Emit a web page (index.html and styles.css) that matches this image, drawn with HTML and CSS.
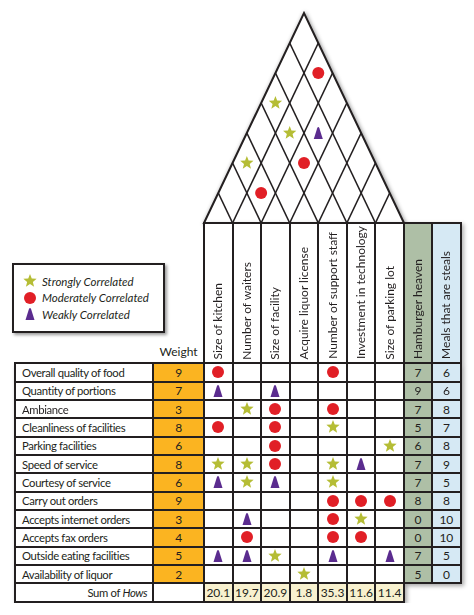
FILE: index.html
```html
<!DOCTYPE html>
<html lang="en">
<head>
  <meta charset="UTF-8">
  <title>House of Quality</title>
  <link rel="stylesheet" href="styles.css">
</head>
<body>
  <svg class="defs" width="0" height="0">
    <symbol id="s" viewBox="-7 -7 14 14"><path fill="#b5bd35" d="M0,-7 L1.76,-2.43 L6.66,-2.16 L2.85,0.93 L4.11,5.66 L0,3 L-4.11,5.66 L-2.85,0.93 L-6.66,-2.16 L-1.76,-2.43 Z"/></symbol>
    <symbol id="m" viewBox="-7 -7 14 14"><circle r="6" fill="#e11f26"/></symbol>
    <symbol id="w" viewBox="-7 -7 14 14"><path fill="#5b2c8f" d="M-4.5,6 L-1.2,-4.6 Q0,-7.2 1.2,-4.6 L4.5,6 Z"/></symbol>
  </svg>

  <div class="page">
    <!-- roof: correlations between the hows -->
    <svg class="roof" width="200" height="209" viewBox="0 0 200 209">
      <path class="edge" d="M0,210 L100,0 L200,210 Z"/>
      <line x1="28.57" y1="210" x2="114.29" y2="30"/>
      <line x1="57.14" y1="210" x2="128.57" y2="60"/>
      <line x1="85.71" y1="210" x2="142.86" y2="90"/>
      <line x1="114.29" y1="210" x2="157.14" y2="120"/>
      <line x1="142.86" y1="210" x2="171.43" y2="150"/>
      <line x1="171.43" y1="210" x2="185.71" y2="180"/>
      <line x1="28.57" y1="210" x2="14.29" y2="180"/>
      <line x1="57.14" y1="210" x2="28.57" y2="150"/>
      <line x1="85.71" y1="210" x2="42.86" y2="120"/>
      <line x1="114.29" y1="210" x2="57.14" y2="90"/>
      <line x1="142.86" y1="210" x2="71.43" y2="60"/>
      <line x1="171.43" y1="210" x2="85.71" y2="30"/>
      <use href="#m" x="107.29" y="53" width="14" height="14"/>
      <use href="#s" x="64.43" y="83" width="14" height="14"/>
      <use href="#s" x="78.71" y="113" width="14" height="14"/>
      <use href="#w" x="107.29" y="113" width="14" height="14"/>
      <use href="#s" x="35.86" y="143" width="14" height="14"/>
      <use href="#m" x="93" y="143" width="14" height="14"/>
      <use href="#m" x="50.14" y="173" width="14" height="14"/>
    </svg>

    <div class="top">
      <div class="corner">
        <div class="legend">
          <div class="key"><svg class="sym"><use href="#s"/></svg><span>Strongly Correlated</span></div>
          <div class="key"><svg class="sym"><use href="#m"/></svg><span>Moderately Correlated</span></div>
          <div class="key"><svg class="sym"><use href="#w"/></svg><span>Weakly Correlated</span></div>
        </div>
        <div class="weight-label">Weight</div>
      </div>
      <div class="heads">
        <div class="head"><span>Size of kitchen</span></div>
        <div class="head"><span>Number of waiters</span></div>
        <div class="head"><span>Size of facility</span></div>
        <div class="head"><span>Acquire liquor license</span></div>
        <div class="head"><span>Number of support staff</span></div>
        <div class="head"><span>Investment in technology</span></div>
        <div class="head"><span>Size of parking lot</span></div>
        <div class="head heaven"><span>Hamburger heaven</span></div>
        <div class="head steals"><span>Meals that are steals</span></div>
      </div>
    </div>

    <div class="matrix">
      <div class="c name">Overall quality of food</div><div class="c wt">9</div>
      <div class="c"><svg class="sym"><use href="#m"/></svg></div><div class="c"></div><div class="c"></div><div class="c"></div>
      <div class="c"><svg class="sym"><use href="#m"/></svg></div><div class="c"></div><div class="c"></div>
      <div class="c hh">7</div><div class="c ms">6</div>

      <div class="c name">Quantity of portions</div><div class="c wt">7</div>
      <div class="c"><svg class="sym"><use href="#w"/></svg></div><div class="c"></div><div class="c"><svg class="sym"><use href="#w"/></svg></div><div class="c"></div>
      <div class="c"></div><div class="c"></div><div class="c"></div>
      <div class="c hh">9</div><div class="c ms">6</div>

      <div class="c name">Ambiance</div><div class="c wt">3</div>
      <div class="c"></div><div class="c"><svg class="sym"><use href="#s"/></svg></div><div class="c"><svg class="sym"><use href="#m"/></svg></div><div class="c"></div>
      <div class="c"><svg class="sym"><use href="#m"/></svg></div><div class="c"></div><div class="c"></div>
      <div class="c hh">7</div><div class="c ms">8</div>

      <div class="c name">Cleanliness of facilities</div><div class="c wt">8</div>
      <div class="c"><svg class="sym"><use href="#m"/></svg></div><div class="c"></div><div class="c"><svg class="sym"><use href="#m"/></svg></div><div class="c"></div>
      <div class="c"><svg class="sym"><use href="#s"/></svg></div><div class="c"></div><div class="c"></div>
      <div class="c hh">5</div><div class="c ms">7</div>

      <div class="c name">Parking facilities</div><div class="c wt">6</div>
      <div class="c"></div><div class="c"></div><div class="c"><svg class="sym"><use href="#m"/></svg></div><div class="c"></div>
      <div class="c"></div><div class="c"></div><div class="c"><svg class="sym"><use href="#s"/></svg></div>
      <div class="c hh">6</div><div class="c ms">8</div>

      <div class="c name">Speed of service</div><div class="c wt">8</div>
      <div class="c"><svg class="sym"><use href="#s"/></svg></div><div class="c"><svg class="sym"><use href="#s"/></svg></div><div class="c"><svg class="sym"><use href="#m"/></svg></div><div class="c"></div>
      <div class="c"><svg class="sym"><use href="#s"/></svg></div><div class="c"><svg class="sym"><use href="#w"/></svg></div><div class="c"></div>
      <div class="c hh">7</div><div class="c ms">9</div>

      <div class="c name">Courtesy of service</div><div class="c wt">6</div>
      <div class="c"><svg class="sym"><use href="#w"/></svg></div><div class="c"><svg class="sym"><use href="#s"/></svg></div><div class="c"><svg class="sym"><use href="#w"/></svg></div><div class="c"></div>
      <div class="c"><svg class="sym"><use href="#s"/></svg></div><div class="c"></div><div class="c"></div>
      <div class="c hh">7</div><div class="c ms">5</div>

      <div class="c name">Carry out orders</div><div class="c wt">9</div>
      <div class="c"></div><div class="c"></div><div class="c"></div><div class="c"></div>
      <div class="c"><svg class="sym"><use href="#m"/></svg></div><div class="c"><svg class="sym"><use href="#m"/></svg></div><div class="c"><svg class="sym"><use href="#m"/></svg></div>
      <div class="c hh">8</div><div class="c ms">8</div>

      <div class="c name">Accepts internet orders</div><div class="c wt">3</div>
      <div class="c"></div><div class="c"><svg class="sym"><use href="#w"/></svg></div><div class="c"></div><div class="c"></div>
      <div class="c"><svg class="sym"><use href="#m"/></svg></div><div class="c"><svg class="sym"><use href="#s"/></svg></div><div class="c"></div>
      <div class="c hh">0</div><div class="c ms">10</div>

      <div class="c name">Accepts fax orders</div><div class="c wt">4</div>
      <div class="c"></div><div class="c"><svg class="sym"><use href="#m"/></svg></div><div class="c"></div><div class="c"></div>
      <div class="c"><svg class="sym"><use href="#m"/></svg></div><div class="c"><svg class="sym"><use href="#m"/></svg></div><div class="c"></div>
      <div class="c hh">0</div><div class="c ms">10</div>

      <div class="c name">Outside eating facilities</div><div class="c wt">5</div>
      <div class="c"><svg class="sym"><use href="#w"/></svg></div><div class="c"><svg class="sym"><use href="#w"/></svg></div><div class="c"><svg class="sym"><use href="#s"/></svg></div><div class="c"></div>
      <div class="c"><svg class="sym"><use href="#w"/></svg></div><div class="c"></div><div class="c"><svg class="sym"><use href="#w"/></svg></div>
      <div class="c hh">7</div><div class="c ms">5</div>

      <div class="c name">Availability of liquor</div><div class="c wt">2</div>
      <div class="c"></div><div class="c"></div><div class="c"></div><div class="c"><svg class="sym"><use href="#s"/></svg></div>
      <div class="c"></div><div class="c"></div><div class="c"></div>
      <div class="c hh">5</div><div class="c ms">0</div>

      <div class="c name sum-label">Sum of&nbsp;<em>Hows</em></div><div class="c"></div>
      <div class="c total">20.1</div><div class="c total">19.7</div><div class="c total">20.9</div><div class="c total">1.8</div>
      <div class="c total">35.3</div><div class="c total">11.6</div><div class="c total">11.4</div>
    </div>
  </div>
</body>
</html>
```

FILE: styles.css
```css
body {
  margin: 0;
  background: #fff;
  font-family: Lato, "Liberation Sans", sans-serif;
  font-size: 12px;
  color: #231f20;
}
.defs {
  display: block;
}
.page {
  padding: 13px 0 0 14px;
}
.roof {
  display: block;
  margin-left: 190px;
  overflow: visible;
  filter: drop-shadow(1px 1px 2px rgba(0,0,0,0.45));
}
.roof .edge {
  fill: #fff;
  stroke: #231f20;
  stroke-width: 2;
}
.roof line {
  stroke: #231f20;
  stroke-width: 1.6;
}
.sym {
  width: 14px;
  height: 14px;
  flex: none;
}

/* header band */
.top {
  display: flex;
}
.corner {
  width: 191px;
  height: 142.3px;
  box-sizing: border-box;
  border-right: 2px solid #231f20;
  border-bottom: 2px solid #231f20;
  display: flex;
  flex-direction: column;
}
.legend {
  margin: 41px 0 0 -2px;
  width: 153px;
  height: 70px;
  box-sizing: border-box;
  border: 2px solid #231f20;
  background: #fff;
  box-shadow: 2px 2px 3px rgba(0,0,0,0.4);
  padding: 8px 0 0 9px;
}
.key {
  display: flex;
  align-items: center;
  gap: 5px;
  height: 16.5px;
  font-style: italic;
  font-size: 11.5px;
}
.weight-label {
  margin-top: auto;
  align-self: flex-end;
  width: 49px;
  text-align: center;
  line-height: 16px;
  padding-bottom: 2px;
}
.heads {
  display: grid;
  grid-template-columns: repeat(7, 28.57px) repeat(2, 28.3px);
  height: 142.3px;
  filter: drop-shadow(2px 2px 2px rgba(0,0,0,0.3));
}
.head {
  box-sizing: border-box;
  border-top: 2px solid #231f20;
  border-right: 2px solid #231f20;
  border-bottom: 2px solid #231f20;
  background: #fff;
  display: flex;
  justify-content: center;
  align-items: flex-end;
  padding-bottom: 3px;
}
.head span {
  writing-mode: vertical-rl;
  transform: rotate(180deg);
  white-space: nowrap;
  line-height: 1;
}
.head.heaven {
  background: #aebfa6;
}
.head.steals {
  background: #d6e9f4;
}

/* relationship matrix */
.matrix {
  display: grid;
  grid-template-columns: 140.3px 50.7px repeat(7, 28.57px) repeat(2, 28.3px);
  grid-auto-rows: 18.33px;
  width: max-content;
  filter: drop-shadow(2px 2px 2px rgba(0,0,0,0.35));
}
.c {
  box-sizing: border-box;
  border-right: 2px solid #231f20;
  border-bottom: 2px solid #231f20;
  background: #fff;
  display: flex;
  align-items: center;
  justify-content: center;
  white-space: nowrap;
}
.c.name {
  border-left: 2px solid #231f20;
  justify-content: flex-start;
  padding-left: 6px;
  font-size: 11.3px;
  letter-spacing: -0.35px;
}
.c.wt {
  background: #fbb421;
}
.c.hh {
  background: #aebfa6;
}
.c.ms {
  background: #d6e9f4;
}
.c.sum-label {
  justify-content: flex-end;
  padding-right: 5px;
}
.c.total {
  background: #f8f1cf;
}
```
